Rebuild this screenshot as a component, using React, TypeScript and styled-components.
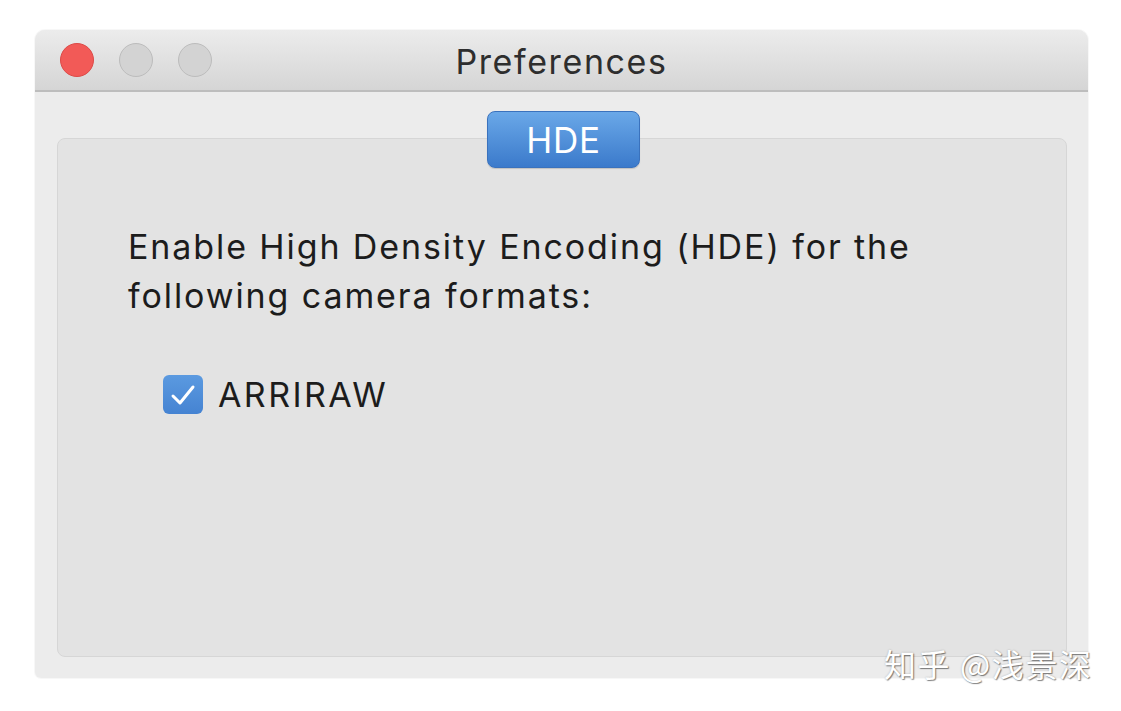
import React from 'react';
import styled, { createGlobalStyle } from 'styled-components';

const GlobalStyle = createGlobalStyle`
  html, body {
    margin: 0;
    padding: 0;
    background: #ffffff;
  }
  body {
    font-family: Inter, "Liberation Sans", Arial, sans-serif;
    -webkit-font-smoothing: antialiased;
  }
`

const Page = styled.div`
  position: relative;
  width: 1121px;
  height: 711px;
  padding: 30px 0 0 35px;
  box-sizing: border-box;
`
const Window = styled.div`
  width: 1053px;
  height: 648px;
  display: flex;
  flex-direction: column;
  background: #ececec;
  border-radius: 10px 10px 6px 6px;
  overflow: hidden;
  box-shadow: 0 0 0 1px rgba(0, 0, 0, 0.03);
`
const TitleBar = styled.div`
  height: 60px;
  flex-shrink: 0;
  display: grid;
  grid-template-columns: 1fr auto 1fr;
  align-items: center;
  background: linear-gradient(#ececec, #d5d5d5);
  border-bottom: 2px solid #bdbdbd;
`
const Lights = styled.div`
  display: flex;
  gap: 25px;
  padding-left: 25px;
`
const Light = styled.span<{ $close?: boolean }>`
  width: 34px;
  height: 34px;
  border-radius: 50%;
  box-sizing: border-box;
  background: ${p => (p.$close ? '#f25a57' : '#d3d3d3')};
  border: 1px solid ${p => (p.$close ? '#dc4a47' : '#bcbcbc')};
`
const Title = styled.div`
  font-size: 34px;
  color: #2e2e2e;
  letter-spacing: 1.6px;
  padding-top: 2px;
`
const Content = styled.div`
  flex: 1;
  display: flex;
  flex-direction: column;
  padding: 19px 21px 21px 22px;
`
const TabRow = styled.div`
  display: flex;
  justify-content: center;
  position: relative;
  z-index: 1;
  padding-left: 3px;
`
const Tab = styled.button`
  width: 153px;
  height: 57px;
  border-radius: 8px;
  border: 1px solid #3a72bd;
  background: linear-gradient(#6aa8e8, #3b7acb);
  color: #fff;
  font-family: inherit;
  font-size: 35px;
  letter-spacing: 0.8px;
  padding: 0;
  box-shadow: 0 1px 1px rgba(0, 0, 0, 0.15);
`
const Panel = styled.div`
  flex: 1;
  margin-top: -30px;
  background: #e3e3e3;
  border: 1px solid #d6d6d6;
  border-radius: 8px;
  padding: 83px 40px 0 70px;
`
const Description = styled.p`
  margin: 0;
  font-size: 34px;
  line-height: 49px;
  color: #1c1c1c;
  letter-spacing: 1.9px;
  white-space: nowrap;
`
const CheckRow = styled.label`
  display: flex;
  align-items: center;
  gap: 15px;
  margin: 54px 0 0 35px;
  font-size: 34px;
  color: #1c1c1c;
  letter-spacing: 2.4px;
`
const CheckBox = styled.span`
  width: 40px;
  height: 39px;
  border-radius: 6px;
  background: linear-gradient(#5b9ae0, #4583d2);
  display: flex;
  align-items: center;
  justify-content: center;
`
const Watermark = styled.div`
  position: absolute;
  left: 884px;
  top: 640px;
  font-family: "Noto Sans CJK SC", sans-serif;
  font-size: 32px;
  color: #fff;
  text-shadow: 1px 1px 1px rgba(0, 0, 0, 0.45), 0 0 2px rgba(0, 0, 0, 0.25);
  letter-spacing: 1.6px;
`

export default function App() {
  return (
    <Page>
      <GlobalStyle />
      <Window>
        <TitleBar>
          <Lights>
            <Light $close />
            <Light />
            <Light />
          </Lights>
          <Title>Preferences</Title>
          <div />
        </TitleBar>
        <Content>
          <TabRow>
            <Tab>HDE</Tab>
          </TabRow>
          <Panel>
            <Description>
              Enable High Density Encoding (HDE) for the<br />
              following camera formats:
            </Description>
            <CheckRow>
              <CheckBox>
                <svg width="26" height="22" viewBox="0 0 26 22">
                  <path d="M3 12 L10 19 L23 3" fill="none" stroke="#fff" strokeWidth="3" strokeLinecap="round" strokeLinejoin="round" />
                </svg>
              </CheckBox>
              ARRIRAW
            </CheckRow>
          </Panel>
        </Content>
      </Window>
      <Watermark>知乎 @浅景深</Watermark>
    </Page>
  );
}
